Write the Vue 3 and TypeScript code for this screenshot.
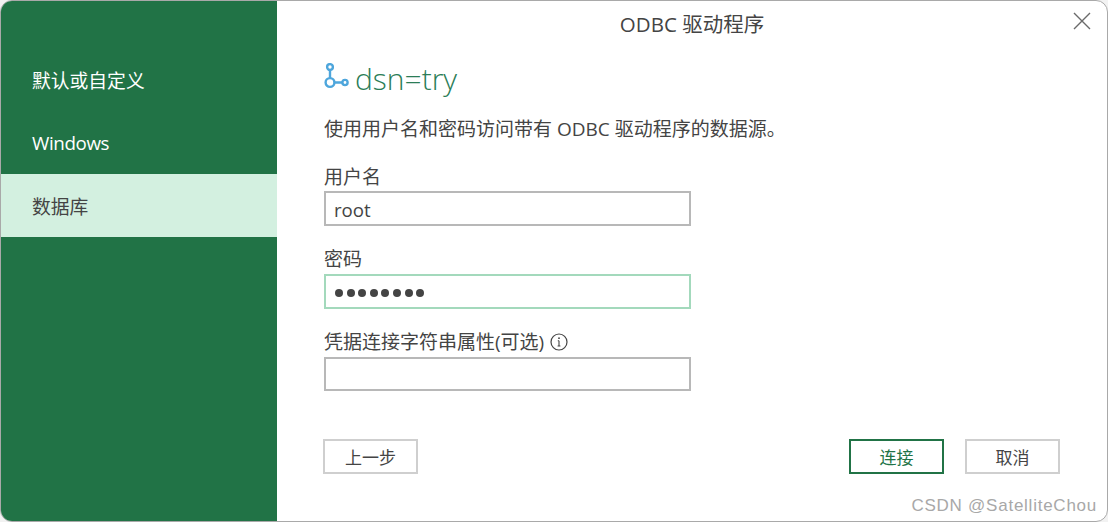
<script setup lang="ts">
const navItems = [
  { label: '默认或自定义', active: false, latin: false },
  { label: 'Windows', active: false, latin: true },
  { label: '数据库', active: true, latin: false },
]
</script>

<template>
  <div class="dialog">
    <aside class="side">
      <div v-for="item in navItems" :key="item.label" class="nav" :class="{ active: item.active, latin: item.latin }">{{ item.label }}</div>
    </aside>
    <main class="main">
      <header class="head">
        <span class="head-title">ODBC 驱动程序</span>
        <svg class="close" width="18" height="18" viewBox="0 0 18 18" aria-label="关闭">
          <path d="M1 1L17 17M17 1L1 17" stroke="#6a6a6a" stroke-width="1.4" fill="none" />
        </svg>
      </header>
      <section class="body">
        <div class="title-row">
          <svg class="link-icon" width="25" height="26" viewBox="0 0 25 26">
            <g fill="none" stroke="#4ea6dc" stroke-width="2.4">
              <circle cx="6" cy="4" r="2.9" />
              <circle cx="6" cy="19.5" r="4.4" />
              <circle cx="21" cy="19.5" r="2.6" />
              <path d="M6 7V15M10.4 19.5H18.4" />
            </g>
          </svg>
          <h1 class="title">dsn=try</h1>
        </div>
        <p class="desc">使用用户名和密码访问带有 ODBC 驱动程序的数据源。</p>
        <label class="label l-user">用户名</label>
        <div class="input">root</div>
        <label class="label l-pass">密码</label>
        <div class="input focus gap">
          <span v-for="n in 8" :key="n" class="dot"></span>
        </div>
        <label class="label l-cred">
          凭据连接字符串属性(可选)
          <svg class="info" width="18" height="18" viewBox="0 0 18 18">
            <circle cx="9" cy="9" r="8" fill="none" stroke="#444" stroke-width="1.2" />
            <path d="M9 7.8V13M7.6 13H10.4M7.8 7.8H9" fill="none" stroke="#444" stroke-width="1.1" />
            <circle cx="9" cy="5.2" r="0.9" fill="#444" />
          </svg>
        </label>
        <div class="input gap last"></div>
        <footer class="actions">
          <button class="btn">上一步</button>
          <div class="right">
            <button class="btn primary">连接</button>
            <button class="btn">取消</button>
          </div>
        </footer>
      </section>
      <div class="mark">CSDN @SatelliteChou</div>
    </main>
  </div>
</template>

<style>
html, body { margin: 0; background: #f2f2f2; }
</style>

<style scoped>
.dialog {
  box-sizing: border-box;
  width: 1108px;
  height: 522px;
  display: flex;
  overflow: hidden;
  border: 1px solid #a9a9a9;
  border-radius: 12px;
  background: #fff;
  font-family: "Open Sans", "Noto Sans CJK SC", sans-serif;
  color: #444;
  font-size: 19px;
}
.side {
  width: 276px;
  flex: none;
  background: #217346;
  padding-top: 47px;
}
.nav {
  height: 63px;
  display: flex;
  align-items: center;
  padding-left: 31px;
  color: #fff;
  font-size: 18.8px;
}
.nav.latin { letter-spacing: -0.4px; }
.nav.active {
  background: #d3f0e0;
  color: #444;
}
.main {
  flex: 1;
  position: relative;
  min-width: 0;
}
.head {
  height: 46px;
  display: flex;
  align-items: center;
  justify-content: center;
}
.head-title { font-size: 20.5px; line-height: 26px; color: #444; }
.close {
  position: absolute;
  top: 11px;
  right: 16px;
}
.body { padding: 0 47px; }
.title-row {
  display: flex;
  align-items: center;
  height: 40px;
  margin-top: 12px;
}
.link-icon { margin-right: 6px; margin-top: -6px; }
.title {
  margin: 0;
  font-size: 30px;
  font-weight: 300;
  color: #2b7d57;
  line-height: 40px;
}
.desc {
  margin: 17px 0 0;
  line-height: 26px;
}
.label {
  display: flex;
  align-items: center;
  line-height: 26px;
  height: 26px;
}
.l-user { margin-top: 22px; }
.l-pass { margin-top: 20px; }
.l-cred { margin-top: 20px; gap: 6px; }
.input {
  box-sizing: border-box;
  width: 367px;
  height: 35px;
  border: 2px solid #b8b8b8;
  padding-left: 8px;
  padding-top: 2px;
  display: flex;
  align-items: center;
  gap: 3.6px;
  color: #444;
  font-size: 18.67px;
  margin-top: 1px;
}
.input.gap { margin-top: 2px; }
.input.focus { border-color: #a3d9bc; padding-left: 9px; padding-top: 3px; }
.input.last { height: 34px; }
.dot {
  width: 8px;
  height: 8px;
  border-radius: 50%;
  background: #444;
}
.actions {
  display: flex;
  justify-content: space-between;
  margin-top: 48px;
  margin-left: -1px;
  width: 737px;
}
.right { display: flex; gap: 21px; }
.btn {
  box-sizing: border-box;
  width: 95px;
  height: 35px;
  border: 2px solid #cfcfcf;
  background: #fff;
  font: inherit;
  font-size: 17px;
  color: #444;
  padding: 0;
}
.btn.primary {
  border-color: #217346;
  color: #217346;
}
.mark {
  position: absolute;
  right: 10px;
  bottom: 5px;
  font-family: "Liberation Sans", sans-serif;
  font-size: 17px;
  color: #a8a8a8;
  letter-spacing: 0.75px;
}
</style>
